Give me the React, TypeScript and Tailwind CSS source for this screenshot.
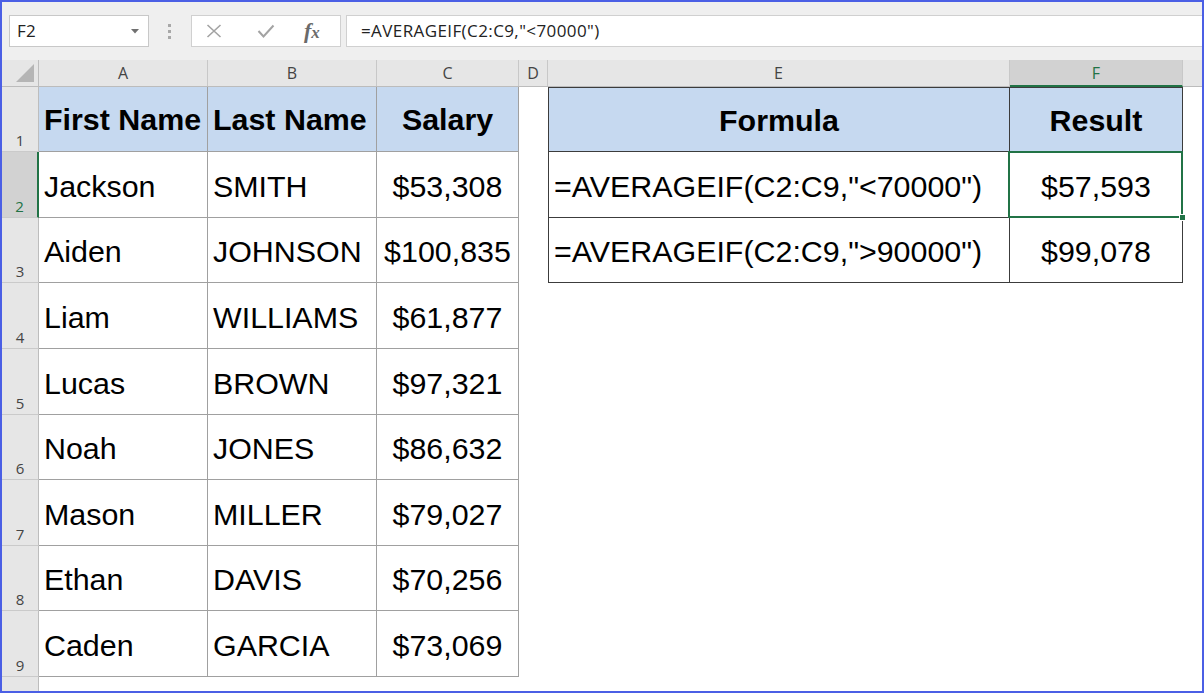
import React from "react";

const leftRows: [string, string, string][] = [
  ["Jackson", "SMITH", "$53,308"],
  ["Aiden", "JOHNSON", "$100,835"],
  ["Liam", "WILLIAMS", "$61,877"],
  ["Lucas", "BROWN", "$97,321"],
  ["Noah", "JONES", "$86,632"],
  ["Mason", "MILLER", "$79,027"],
  ["Ethan", "DAVIS", "$70,256"],
  ["Caden", "GARCIA", "$73,069"],
];

const rightRows: [string, string][] = [
  ['=AVERAGEIF(C2:C9,"<70000")', "$57,593"],
  ['=AVERAGEIF(C2:C9,">90000")', "$99,078"],
];

const heights = [
  "h-[65px]",
  "h-[66px]",
  "h-[65px]",
  "h-[66px]",
  "h-[66px]",
  "h-[65px]",
  "h-[66px]",
  "h-[65px]",
  "h-[66px]",
];

const cellFont = "font-['Liberation_Sans',Arial,sans-serif] text-[30.4px] leading-[34px] text-black";
const uiFont = "font-['Open_Sans','Noto_Sans',sans-serif]";

function RowHeader({ n, selected }: { n: number; selected?: boolean }) {
  return (
    <div
      className={`w-[37px] shrink-0 h-full flex items-end justify-center pb-[3px] border-b border-[#cacaca] ${
        selected
          ? "bg-[#d2d2d2] border-r-2 border-r-[#217346] text-[#217346]"
          : "bg-[#e6e6e6] border-r border-r-[#bdbdbd] text-[#444]"
      } ${uiFont} text-[15px] leading-[16px]`}
    >
      {n}
    </div>
  );
}

export default function App() {
  return (
    <div className="w-[1204px] h-[693px] border-2 border-[#4b5fe5] bg-white overflow-hidden flex flex-col">
      {/* Formula bar */}
      <div className="h-[58px] shrink-0 bg-[#efefef] flex items-start pt-[13px] pl-[7px]">
        <div className="w-[140px] h-[32px] bg-white border border-[#c8c8c8] flex items-center justify-between pl-[7px] pr-[9px]">
          <span className={`${uiFont} text-[17px] tracking-[0.3px] text-[#222]`}>F2</span>
          <svg width="8" height="5" viewBox="0 0 8 5">
            <path d="M0 0 L8 0 L4 4.5 Z" fill="#707070" />
          </svg>
        </div>
        <div className="ml-[19px] h-[32px] flex flex-col justify-center gap-[3px]">
          <span className="w-[3px] h-[3px] bg-[#a8a8a8] block" />
          <span className="w-[3px] h-[3px] bg-[#a8a8a8] block" />
          <span className="w-[3px] h-[3px] bg-[#a8a8a8] block" />
        </div>
        <div className="ml-[20px] w-[150px] h-[32px] bg-white border border-[#d0d0d0] flex items-center">
          <svg className="ml-[14px]" width="16" height="14" viewBox="0 0 16 14">
            <path d="M1.5 1 L14.5 13 M14.5 1 L1.5 13" stroke="#a3a3a3" strokeWidth="1.6" fill="none" />
          </svg>
          <svg className="ml-[35px]" width="18" height="14" viewBox="0 0 18 14">
            <path d="M1.5 7 L6.5 12.5 L16.5 1.5" stroke="#a3a3a3" strokeWidth="2" fill="none" />
          </svg>
          <span className="ml-[29px] font-['Liberation_Serif','Times_New_Roman',serif] italic font-bold text-[22px] leading-none text-[#6a6a6a]">
            f<span className="text-[17px]">x</span>
          </span>
        </div>
        <div className="ml-[5px] flex-1 h-[32px] bg-white border border-[#d0d0d0] border-r-0 flex items-center pl-[14px]">
          <span className={`${uiFont} text-[17px] tracking-[0.4px] text-[#222]`}>=AVERAGEIF(C2:C9,"&lt;70000")</span>
        </div>
      </div>

      {/* Column headers */}
      <div className={`h-[27px] shrink-0 flex bg-[#e6e6e6] border-b border-[#bcbcbc] ${uiFont} text-[16px] text-[#444]`}>
        <div className="w-[37px] shrink-0 border-r border-[#bdbdbd] relative">
          <svg className="absolute left-[14px] top-[4px]" width="19" height="19" viewBox="0 0 19 19">
            <path d="M0 18 L18 0 L18 18 Z" fill="#b5b5b5" />
          </svg>
        </div>
        <div className="w-[169px] shrink-0 border-r border-[#c8c8c8] flex items-center justify-center">A</div>
        <div className="w-[169px] shrink-0 border-r border-[#c8c8c8] flex items-center justify-center">B</div>
        <div className="w-[142px] shrink-0 border-r border-[#c8c8c8] flex items-center justify-center">C</div>
        <div className="w-[29px] shrink-0 border-r border-[#c8c8c8] flex items-center justify-center">D</div>
        <div className="w-[462px] shrink-0 border-r border-[#c8c8c8] flex items-center justify-center">E</div>
        <div className="w-[173px] shrink-0 bg-[#d2d2d2] border-r border-[#c8c8c8] border-b-2 border-b-[#217346] -mb-[1px] flex items-center justify-center text-[#217346]">
          F
        </div>
        <div className="flex-1" />
      </div>

      {/* Row 1 - headers */}
      <div className={`${heights[0]} shrink-0 flex`}>
        <RowHeader n={1} />
        <div className={`w-[169px] shrink-0 bg-[#c6d9f0] border-r border-b border-[#a0a0a0] flex items-center pl-[5px] font-bold ${cellFont}`}>
          First Name
        </div>
        <div className={`w-[169px] shrink-0 bg-[#c6d9f0] border-r border-b border-[#a0a0a0] flex items-center pl-[5px] font-bold ${cellFont}`}>
          Last Name
        </div>
        <div className={`w-[142px] shrink-0 bg-[#c6d9f0] border-r border-b border-[#a0a0a0] flex items-center justify-center font-bold ${cellFont}`}>
          Salary
        </div>
        <div className="w-[29px] shrink-0 bg-white" />
        <div className={`w-[462px] shrink-0 bg-[#c6d9f0] border border-[#3c3c3c] flex items-center justify-center font-bold ${cellFont}`}>
          Formula
        </div>
        <div className={`w-[173px] shrink-0 bg-[#c6d9f0] border-t border-r border-b border-[#3c3c3c] flex items-center justify-center font-bold ${cellFont}`}>
          Result
        </div>
        <div className="flex-1" />
      </div>

      {/* Data rows */}
      {leftRows.map((r, i) => {
        const right = rightRows[i];
        const selected = i === 0;
        return (
          <div key={i} className={`${heights[i + 1]} shrink-0 flex`}>
            <RowHeader n={i + 2} selected={selected} />
            <div className={`w-[169px] shrink-0 border-r border-b border-[#a0a0a0] flex items-center pl-[5px] pt-[2px] ${cellFont}`}>
              {r[0]}
            </div>
            <div className={`w-[169px] shrink-0 border-r border-b border-[#a0a0a0] flex items-center pl-[5px] pt-[2px] ${cellFont}`}>
              {r[1]}
            </div>
            <div className={`w-[142px] shrink-0 border-r border-b border-[#a0a0a0] flex items-center justify-center pt-[2px] ${cellFont}`}>
              {r[2]}
            </div>
            <div className="w-[29px] shrink-0" />
            {right ? (
              <>
                <div className={`w-[462px] shrink-0 border-l border-r border-b border-[#3c3c3c] flex items-center pl-[5px] pt-[2px] ${cellFont}`}>
                  {right[0]}
                </div>
                <div className={`w-[173px] shrink-0 border-r border-b border-[#3c3c3c] flex items-center justify-center pt-[2px] relative ${cellFont}`}>
                  {right[1]}
                  {selected && (
                    <>
                      <span className="absolute -left-[2px] -top-[1px] -right-[1px] -bottom-[1px] border-2 border-[#217346] pointer-events-none z-10" />
                      <span className="absolute -right-[4px] -bottom-[4px] w-[7px] h-[7px] bg-[#217346] border border-white z-20" />
                    </>
                  )}
                </div>
              </>
            ) : (
              <>
                <div className="w-[462px] shrink-0" />
                <div className="w-[173px] shrink-0" />
              </>
            )}
            <div className="flex-1" />
          </div>
        );
      })}

      {/* Row 10 partial */}
      <div className="flex-1 flex">
        <div className="w-[37px] shrink-0 h-full bg-[#e6e6e6] border-r border-[#bdbdbd]" />
        <div className="flex-1" />
      </div>
    </div>
  );
}
